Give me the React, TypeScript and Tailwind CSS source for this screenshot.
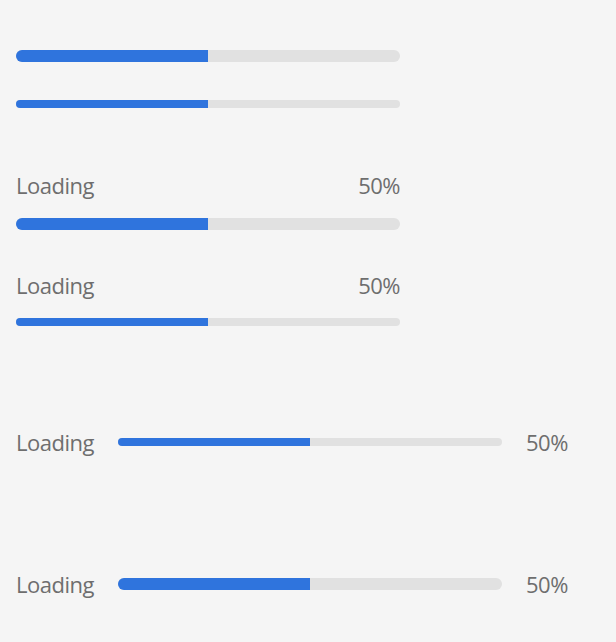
export default function App() {
  const font = { fontFamily: '"Open Sans", "Noto Sans", sans-serif' }

  const Track = ({ large }: { large?: boolean }) => (
    <div className={`w-[384px] ${large ? "h-[12px]" : "h-[8px]"} rounded-full bg-[#e1e1e1] overflow-hidden flex`}>
      <div className="w-1/2 h-full bg-[#2f74dd]" />
    </div>
  )

  return (
    <div className="min-h-[642px] w-[616px] bg-[#f5f5f5] px-4 pt-[50px] text-[#6e6e6e] tracking-[-0.5px]" style={font}>
      <Track large />
      <div className="mt-[38px]">
        <Track />
      </div>

      {/* top labels */}
      <div className="mt-[61px] w-[384px]">
        <div className="flex justify-between text-[22px] leading-[32px]">
          <span>Loading</span>
          <span>50%</span>
        </div>
        <div className="mt-[17px]">
          <Track large />
        </div>
      </div>
      <div className="mt-[39px] w-[384px]">
        <div className="flex justify-between text-[22px] leading-[32px]">
          <span>Loading</span>
          <span>50%</span>
        </div>
        <div className="mt-[17px]">
          <Track />
        </div>
      </div>

      {/* side labels */}
      <div className="mt-[100px] flex items-center h-[32px] text-[22px] leading-[30px]">
        <span className="w-[102px]">Loading</span>
        <Track />
        <span className="ml-[24px]">50%</span>
      </div>
      <div className="mt-[110px] flex items-center h-[32px] text-[22px] leading-[30px]">
        <span className="w-[102px]">Loading</span>
        <Track large />
        <span className="ml-[24px]">50%</span>
      </div>
    </div>
  )
}
